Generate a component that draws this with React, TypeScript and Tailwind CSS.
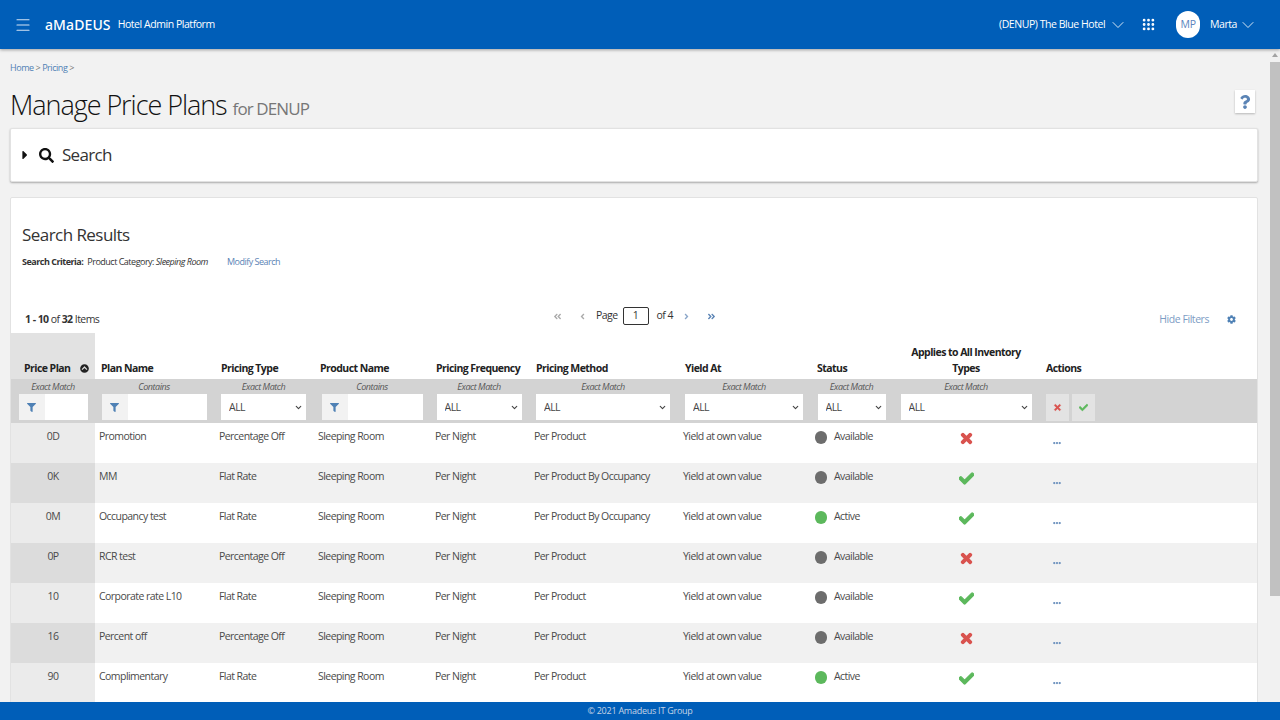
import { ChevronDown, Grip, Menu } from "lucide-react";
import {
  FaAngleDoubleLeft,
  FaAngleDoubleRight,
  FaAngleLeft,
  FaAngleRight,
  FaCaretRight,
  FaCheck,
  FaChevronCircleUp,
  FaCog,
  FaEllipsisH,
  FaFilter,
  FaQuestion,
  FaSearch,
  FaTimes,
} from "react-icons/fa";

const rows = [
  { id: "0D", name: "Promotion", type: "Percentage Off", method: "Per Product", status: "Available", all: false },
  { id: "0K", name: "MM", type: "Flat Rate", method: "Per Product By Occupancy", status: "Available", all: true },
  { id: "0M", name: "Occupancy test", type: "Flat Rate", method: "Per Product By Occupancy", status: "Active", all: true },
  { id: "0P", name: "RCR test", type: "Percentage Off", method: "Per Product", status: "Available", all: false },
  { id: "10", name: "Corporate rate L10", type: "Flat Rate", method: "Per Product", status: "Available", all: true },
  { id: "16", name: "Percent off", type: "Percentage Off", method: "Per Product", status: "Available", all: false },
  { id: "90", name: "Complimentary", type: "Flat Rate", method: "Per Product", status: "Active", all: true },
];

function FilterLabel({ text }: { text: string }) {
  return <div className="h-[15px] pt-[1px] text-center text-[9px] leading-[14px] tracking-[-0.45px] italic text-[#555]">{text}</div>;
}

function TextFilter({ label, width }: { label: string; width: string }) {
  return (
    <th className="p-0 align-top font-normal">
      <FilterLabel text={label} />
      <div className={`mx-auto flex h-[26px] ${width}`}>
        <div className="flex w-[26px] shrink-0 items-center justify-center bg-[#f2f2f2] text-[#4f81b5]">
          <FaFilter size={9} />
        </div>
        <input className="min-w-0 flex-1 bg-white" aria-label={label} />
      </div>
    </th>
  );
}

function SelectFilter({ width }: { width: string }) {
  return (
    <th className="p-0 align-top font-normal">
      <FilterLabel text="Exact Match" />
      <div className={`relative mx-auto h-[26px] ${width}`}>
        <select className="block h-full w-full appearance-none bg-white pt-[2px] pl-[8px] text-[10.5px] tracking-[-0.5px] text-[#444]">
          <option>ALL</option>
        </select>
        <ChevronDown size={9} strokeWidth={3} className="absolute top-[9px] right-[3px] text-[#444]" />
      </div>
    </th>
  );
}

export default function App() {
  return (
    <div className="flex h-[720px] flex-col overflow-hidden bg-[#f2f2f2] font-['Open_Sans',sans-serif] text-[#333]">
      <header className="z-10 flex h-[49px] shrink-0 items-center bg-[#005eb8] text-white shadow-[0_1px_3px_rgba(0,0,0,0.35)]">
        <Menu size={18} strokeWidth={1.5} className="ml-[14px] text-[#d5e4f4]" />
        <span className="ml-[13px] font-['Noto_Sans',sans-serif] text-[14px] font-medium tracking-[0.1px]">aMaDEUS</span>
        <span className="ml-[7px] text-[10.5px] tracking-[-0.45px]">Hotel Admin Platform</span>
        <span className="ml-auto text-[10.5px] tracking-[-0.45px]">(DENUP) The Blue Hotel</span>
        <ChevronDown size={20} strokeWidth={1} className="ml-[3px]" />
        <Grip size={15} strokeWidth={2.5} className="ml-[13px]" />
        <div className="ml-[20px] flex h-[27px] w-[24px] items-center justify-center rounded-full bg-white text-[10.5px] tracking-[-0.2px] text-[#5b84bd]">MP</div>
        <span className="ml-[10px] text-[10.5px] tracking-[-0.45px]">Marta</span>
        <ChevronDown size={20} strokeWidth={1} className="mr-[22px] ml-[1px]" />
      </header>

      <div className="flex min-h-0 flex-1">
        <main className="min-w-0 flex-1 overflow-hidden pr-[12px] pl-[10px]">
          <nav className="pt-[13px] text-[9px] leading-[12px] tracking-[-0.45px] text-[#777]">
            <span className="text-[#4f81b5]">Home</span> &gt; <span className="text-[#4f81b5]">Pricing</span> &gt;
          </nav>
          <div className="mt-[7px] flex h-[47px] items-start">
            <h1 className="mt-[6px] text-[27px] leading-[36px] font-light tracking-[-1.05px] text-[#111]">
              Manage Price Plans <span className="text-[17px] font-normal tracking-[-0.9px] text-[#777]">for DENUP</span>
            </h1>
            <button className="mt-[9px] mr-[3px] ml-auto flex h-[23px] w-[20px] items-center justify-center bg-white text-[#5b84b5] shadow-[0_1px_2px_rgba(0,0,0,0.25)]" aria-label="Help">
              <FaQuestion size={14} />
            </button>
          </div>

          <section className="flex h-[54px] items-center rounded-[2px] border border-[#e2e2e2] bg-white pl-[7px] shadow-[0_1px_2px_rgba(0,0,0,0.3)]">
            <FaCaretRight size={14} className="text-[#111]" />
            <FaSearch size={15} className="ml-[7px] text-[#111]" />
            <span className="ml-[8px] text-[17px] tracking-[-0.7px] text-[#333]">Search</span>
          </section>

          <section className="mt-[15px] rounded-[2px] border border-[#e2e2e2] bg-white">
            <div className="pt-[24px] pl-[11px] text-[17px] leading-[25px] tracking-[-0.55px] text-[#333]">Search Results</div>
            <div className="mt-[8px] flex pl-[11px] text-[9px] leading-[14px] tracking-[-0.5px]">
              <b className="font-bold">Search Criteria:</b>
              <span className="ml-[4px]">Product Category: <i>Sleeping Room</i></span>
              <span className="ml-[19px] text-[#5b84b5]">Modify Search</span>
            </div>

            <div className="relative mt-[38px] flex h-[26px] items-start pr-[21px] pl-[14px] text-[10.5px] tracking-[-0.55px]">
              <div className="mt-[4px] leading-[16px]">
                <b>1 - 10</b> of <b>32</b> Items
              </div>
              <div className="absolute top-0 left-[542px] flex h-[18px] items-center">
                <FaAngleDoubleLeft size={9} className="text-[#aaa]" />
                <FaAngleLeft size={9} className="ml-[16px] text-[#aaa]" />
                <span className="ml-[9px]">Page</span>
                <span className="ml-[5px] flex h-[18px] w-[26px] items-center justify-center rounded-[2px] border border-[#333]">1</span>
                <span className="ml-[8px]">of 4</span>
                <FaAngleRight size={9} className="ml-[9px] text-[#8aa6c9]" />
                <FaAngleDoubleRight size={9} className="ml-[16px] text-[#5b84b5]" />
              </div>
              <span className="mt-[4px] ml-auto leading-[16px] tracking-[-0.45px] text-[#7c9cc4]">Hide Filters</span>
              <FaCog size={9} className="mt-[8px] ml-[18px] text-[#4f81b5]" />
            </div>

            <table className="w-full table-fixed border-collapse text-[10.5px] tracking-[-0.55px]">
              <colgroup>
                <col className="w-[84px]" />
                <col className="w-[118px]" />
                <col className="w-[101px]" />
                <col className="w-[116px]" />
                <col className="w-[98px]" />
                <col className="w-[150px]" />
                <col className="w-[132px]" />
                <col className="w-[83px]" />
                <col className="w-[146px]" />
                <col />
              </colgroup>
              <thead>
                <tr className="h-[46px] text-left leading-[16px] font-semibold text-[#222]">
                  <th className="bg-[#e2e2e2] pr-[6px] pb-[3px] pl-[13px] align-bottom">
                    <div className="flex items-center justify-between">
                      Price Plan <FaChevronCircleUp size={9} />
                    </div>
                  </th>
                  <th className="pb-[3px] pl-[6px] align-bottom">Plan Name</th>
                  <th className="pb-[3px] pl-[8px] align-bottom">Pricing Type</th>
                  <th className="pb-[3px] pl-[6px] align-bottom">Product Name</th>
                  <th className="pb-[3px] pl-[6px] align-bottom">Pricing Frequency</th>
                  <th className="pb-[3px] pl-[8px] align-bottom">Pricing Method</th>
                  <th className="pb-[3px] pl-[7px] align-bottom">Yield At</th>
                  <th className="pb-[3px] pl-[7px] align-bottom">Status</th>
                  <th className="pb-[3px] text-center align-bottom">
                    Applies to All Inventory
                    <br />
                    Types
                  </th>
                  <th className="pb-[3px] pl-[7px] align-bottom">Actions</th>
                </tr>
                <tr className="h-[44px] bg-[#d3d3d3]">
                  <TextFilter label="Exact Match" width="w-[69px]" />
                  <TextFilter label="Contains" width="w-[105px]" />
                  <SelectFilter width="w-[85px]" />
                  <TextFilter label="Contains" width="w-[101px]" />
                  <SelectFilter width="w-[85px]" />
                  <SelectFilter width="w-[134px]" />
                  <SelectFilter width="w-[118px]" />
                  <SelectFilter width="w-[68px]" />
                  <SelectFilter width="w-[131px]" />
                  <th className="p-0 align-top">
                    <div className="mt-[15px] ml-[7px] flex gap-[3px]">
                      <button className="flex h-[27px] w-[23px] items-center justify-center bg-[#e3e3e3] text-[#d9534f]" aria-label="Clear filters">
                        <FaTimes size={9} stroke="currentColor" strokeWidth={30} />
                      </button>
                      <button className="flex h-[27px] w-[23px] items-center justify-center bg-[#e3e3e3] text-[#5cb85c]" aria-label="Apply filters">
                        <FaCheck size={9} stroke="currentColor" strokeWidth={30} />
                      </button>
                    </div>
                  </th>
                </tr>
              </thead>
              <tbody>
                {rows.map((row, index) => (
                  <tr key={row.id} className={`h-[40px] align-top leading-[16px] text-[#4a4a4a] ${index % 2 ? "bg-[#f1f1f1]" : "bg-white"}`}>
                    <td className={`pt-[5px] text-center ${index % 2 ? "bg-[#dcdcdc]" : "bg-[#ebebeb]"}`}>{row.id}</td>
                    <td className="pt-[5px] pl-[4px]">{row.name}</td>
                    <td className="pt-[5px] pl-[6px]">{row.type}</td>
                    <td className="pt-[5px] pl-[4px]">Sleeping Room</td>
                    <td className="pt-[5px] pl-[5px]">Per Night</td>
                    <td className="pt-[5px] pl-[6px]">{row.method}</td>
                    <td className="pt-[5px] pl-[5px]">Yield at own value</td>
                    <td className="pt-[5px] pl-[5px]">
                      <div className="flex">
                        <span className={`mt-[3px] h-[13px] w-[12px] rounded-full ${row.status === "Active" ? "bg-[#5cb85c]" : "bg-[#6d6d6d]"}`} />
                        <span className="ml-[7px]">{row.status}</span>
                      </div>
                    </td>
                    <td className="pt-[8px]">
                      {row.all ? (
                        <FaCheck size={15} stroke="currentColor" strokeWidth={40} className="mx-auto text-[#5cb85c]" />
                      ) : (
                        <FaTimes size={15} stroke="currentColor" strokeWidth={40} className="mx-auto text-[#d9534f]" />
                      )}
                    </td>
                    <td className="pt-[16px] pl-[14px]">
                      <FaEllipsisH size={8} className="text-[#6f93bf]" />
                    </td>
                  </tr>
                ))}
              </tbody>
            </table>
          </section>
        </main>

        <aside className="flex w-[10px] shrink-0 flex-col items-center bg-[#f1f1f1]">
          <div className="mt-[4px] h-0 w-0 border-x-[3px] border-b-[4px] border-x-transparent border-b-[#a3a3a3]" />
          <div className="mt-[5px] h-[534px] w-full bg-[#c1c1c1]" />
        </aside>
      </div>

      <footer className="z-10 flex h-[18px] shrink-0 items-center justify-center bg-[#005eb8] text-[9px] tracking-[-0.25px] text-[#c5d4e6]">
        © 2021 Amadeus IT Group
      </footer>
    </div>
  );
}
